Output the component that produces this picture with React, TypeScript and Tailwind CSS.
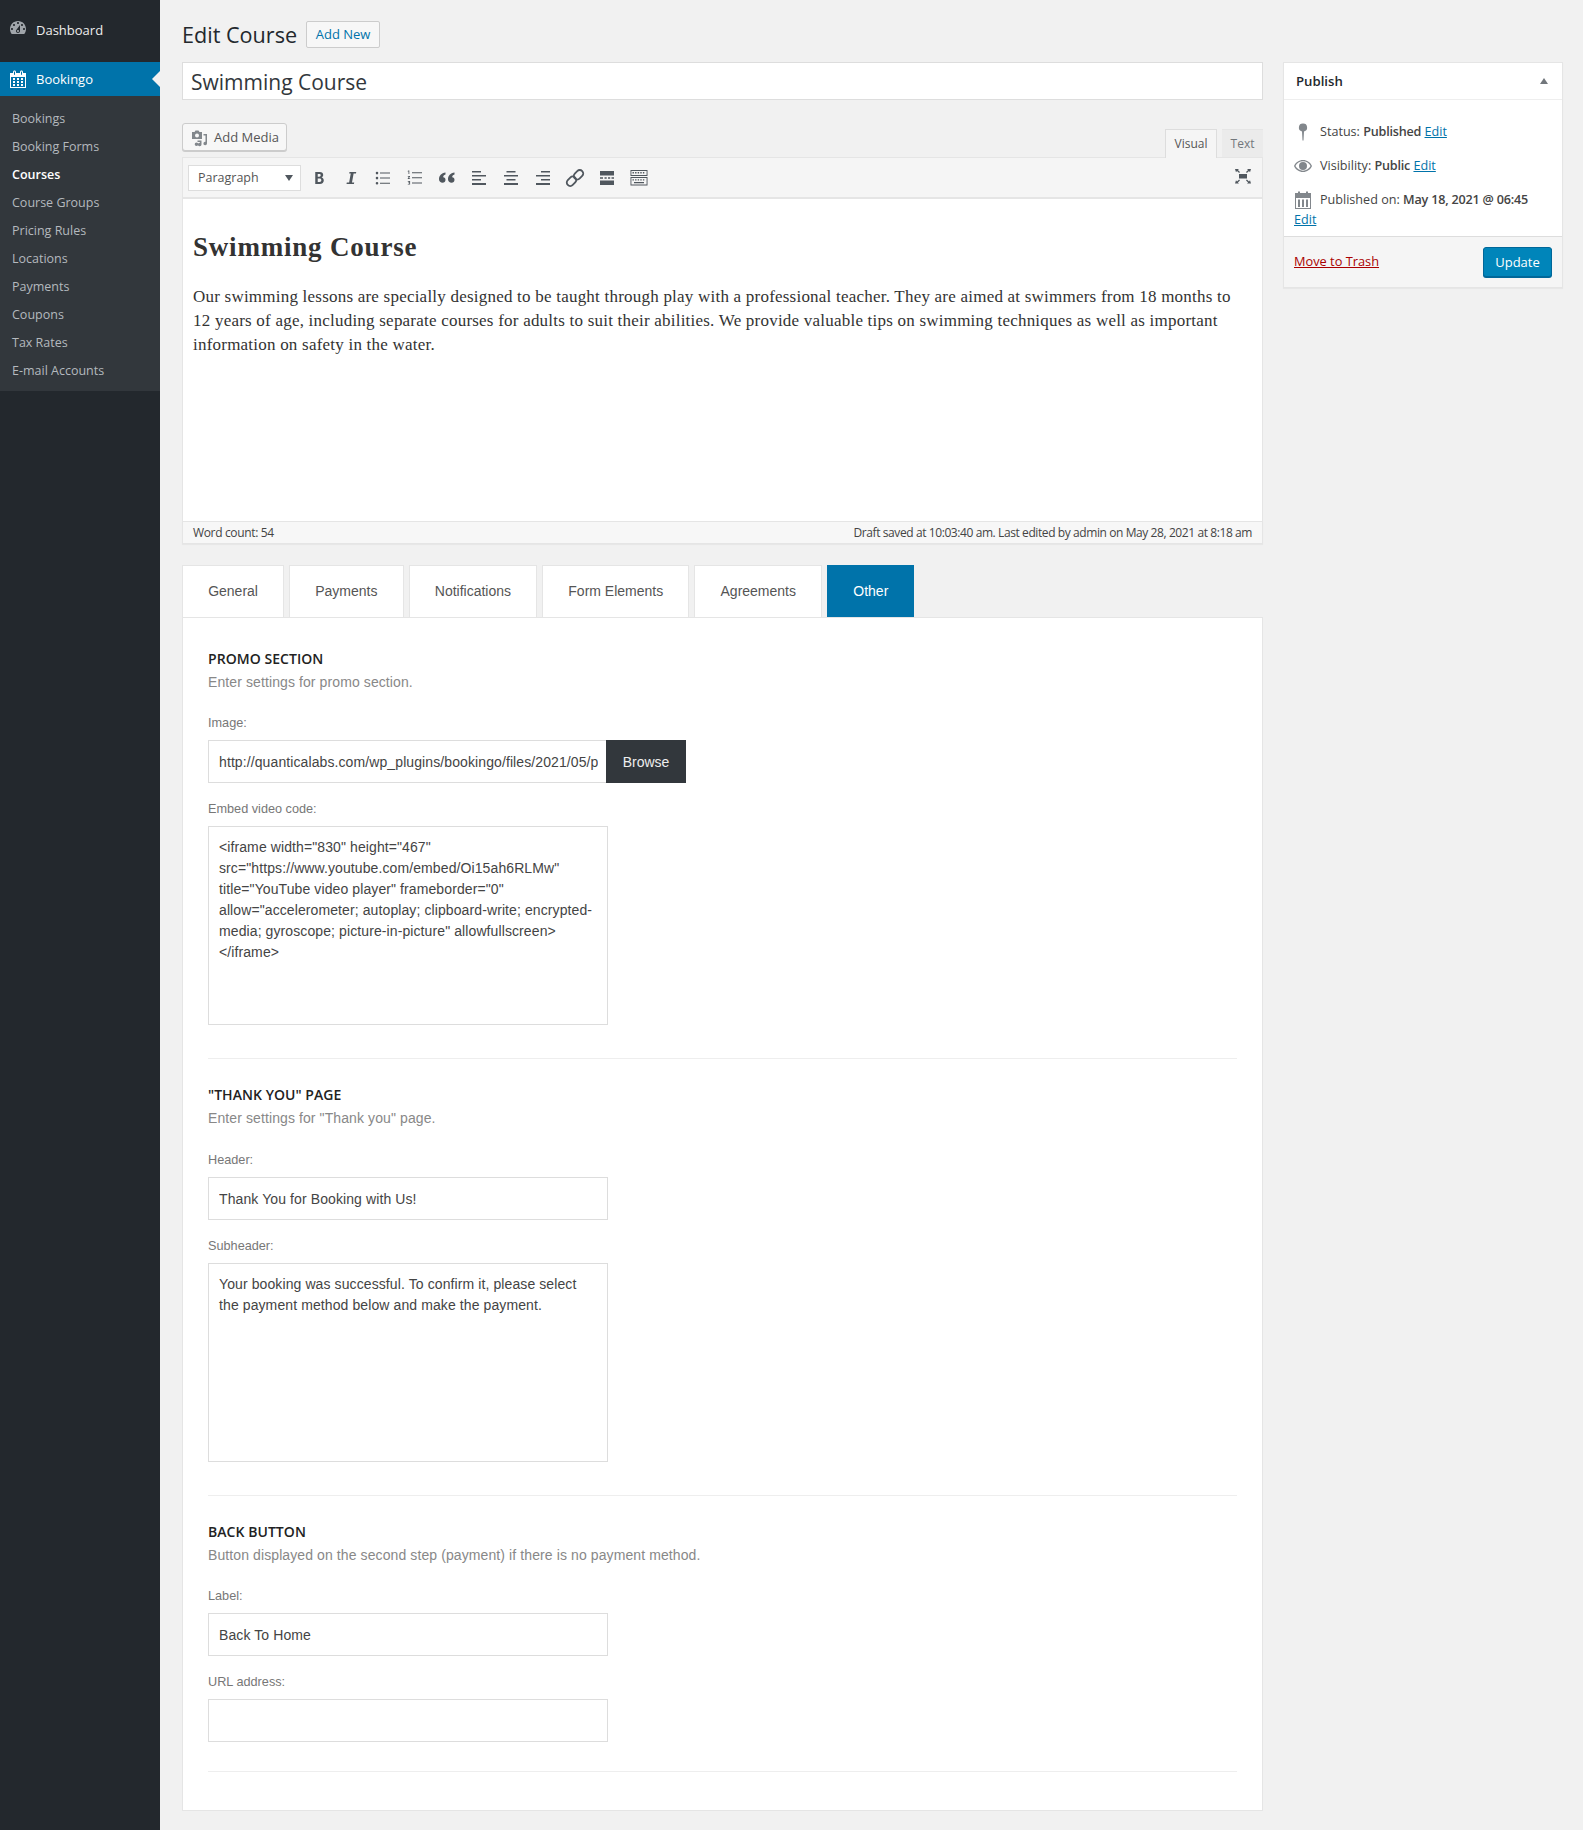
import type { ReactNode } from 'react';

const dashboardPath =
  'M3.76 16h12.48c1.1-1.37 1.76-3.11 1.76-5 0-4.42-3.58-8-8-8s-8 3.58-8 8c0 1.89.66 3.63 1.76 5zM10 4c.55 0 1 .45 1 1s-.45 1-1 1-1-.45-1-1 .45-1 1-1zM6 6c.55 0 1 .45 1 1s-.45 1-1 1-1-.45-1-1 .45-1 1-1zm8 0c.55 0 1 .45 1 1s-.45 1-1 1-1-.45-1-1 .45-1 1-1zm-5.37 5.55L12 7v6c0 1.1-.9 2-2 2s-2-.9-2-2c0-.57.24-1.08.63-1.45zM4 10c.55 0 1 .45 1 1s-.45 1-1 1-1-.45-1-1 .45-1 1-1zm12 0c.55 0 1 .45 1 1s-.45 1-1 1-1-.45-1-1 .45-1 1-1zm-5 3c0-.55-.45-1-1-1s-1 .45-1 1 .45 1 1 1 1-.45 1-1z';
const calendarPath =
  'M15 4h3v15H2V4h3V3c0-.41.15-.76.44-1.06.29-.29.65-.44 1.06-.44s.77.15 1.06.44c.29.3.44.65.44 1.06v1h4V3c0-.41.15-.76.44-1.06.29-.29.65-.44 1.06-.44s.77.15 1.06.44c.29.3.44.65.44 1.06v1zM6 3v2.5c0 .14.05.26.15.36.09.09.21.14.35.14s.26-.05.35-.14c.1-.1.15-.22.15-.36V3c0-.14-.05-.26-.15-.35-.09-.1-.21-.15-.35-.15s-.26.05-.35.15c-.1.09-.15.21-.15.35zm7 0v2.5c0 .14.05.26.14.36.1.09.22.14.36.14s.26-.05.36-.14c.09-.1.14-.22.14-.36V3c0-.14-.05-.26-.14-.35-.1-.1-.22-.15-.36-.15s-.26.05-.36.15c-.09.09-.14.21-.14.35zm4 15V8H3v10h14zM7 9v2H5V9h2zm2 0h2v2H9V9zm4 2V9h2v2h-2zm-6 1v2H5v-2h2zm2 0h2v2H9v-2zm4 2v-2h2v2h-2zm-6 1v2H5v-2h2zm4 2H9v-2h2v2zm4 0h-2v-2h2v2z';

const Icon = ({ size = 20, color, children }: { size?: number; color: string; children: ReactNode }) => (
  <svg width={size} height={size} viewBox="0 0 20 20" fill={color} className="shrink-0">
    {children}
  </svg>
);

const toolbarColor = '#50575e';

const toolbarIcons: ReactNode[] = [
  <path key="b" transform="translate(2.500 2.500) scale(.75)" d="M5 2h6c3 0 4.600 1.500 4.600 3.900 0 1.600-.9 2.800-2.200 3.300 1.800.4 3 1.900 3 3.900 0 3-2 4.900-5.200 4.900H5V2zm3.300 2.700v3.500h2.100c1.200 0 1.900-.6 1.900-1.800s-.7-1.700-1.900-1.700H8.300zm0 6v4.600h2.500c1.500 0 2.300-.8 2.300-2.300s-.8-2.300-2.300-2.300H8.300z" />,
  <path key="i" transform="translate(2.500 2.500) scale(.75)" d="M8 2h9l-.4 2h-3.100l-2.200 12h3l-.4 2H4l.4-2h3.100L9.700 4H7.600L8 2z" />,
  <path key="ul" d="M4 3.800a1.300 1.300 0 1 1 0 2.600 1.300 1.300 0 0 1 0-2.600zm0 5a1.300 1.300 0 1 1 0 2.600 1.300 1.300 0 0 1 0-2.600zm0 5.200a1.300 1.300 0 1 1 0 2.600 1.300 1.300 0 0 1 0-2.600zM7 4.600h10v1H7v-1zm0 5h10v1H7v-1zm0 5.200h10v1H7v-1z" />,
  <path key="ol" d="M3.500 2.500h.8v3.500h-.8V3.400h-.8v-.5l.8-.4zM2.800 8h2.200v.7L3.800 10.200h1.300v.7H2.800v-.7L4 8.700H2.800V8zm0 5h2.300v3.600H2.800v-.7h1.400v-.7h-1v-.6h1v-.9H2.800V13zM7 4.200h10v1H7v-1zm0 5h10v1H7v-1zm0 5.200h10v1H7v-1z" />,
  <path key="q" d="M8.500 4.500v2C6.800 7 6.300 8 6.200 9.200c1.400 0 2.300 1 2.300 2.500 0 1.800-1.200 3-3 3S2 13.300 2 11.300c0-3.700 2.400-6.300 6.500-6.800zm9 0v2c-1.700.5-2.200 1.500-2.300 2.700 1.400 0 2.300 1 2.300 2.500 0 1.800-1.200 3-3 3s-3.500-1.400-3.500-3.400c0-3.700 2.400-6.300 6.500-6.800z" />,
  <path key="al" d="M3 3h9v1.600H3V3zm0 4h14v1.400H3V7zm0 4h9v1.400H3V11zm0 4h14v2H3v-2z" />,
  <path key="ac" d="M5.500 3h9v1.600h-9V3zM3 7h14v1.400H3V7zm2.500 4h9v1.400h-9V11zM3 15h14v2H3v-2z" />,
  <path key="ar" d="M8 3h9v1.600H8V3zM3 7h14v1.400H3V7zm5 4h9v1.400H8V11zM3 15h14v2H3v-2z" />,
  <g key="lnk" fill="none" stroke={toolbarColor} strokeWidth="1.800">
    <rect x="10" y="1.500" width="7" height="10.500" rx="3.500" transform="rotate(45 13.500 6.750)" />
    <rect x="3" y="8" width="7" height="10.500" rx="3.500" transform="rotate(45 6.500 13.250)" />
  </g>,
  <path key="more" d="M3 3h14v4.500H3V3zm0 9.500h14V17H3v-4.500zM3 9.200h3v1.600H3V9.200zm4.500 0h2.200v1.600H7.500V9.200zm3.500 0h2.200v1.600H11V9.200zm3.500 0H17v1.600h-2.500V9.200z" />,
  <g key="kb">
    <path fillRule="evenodd" d="M1.500 2h17v6h-17V2zm.9.900v4.200h15.200V2.900H2.400zM1.500 9h17v8.500h-17V9zm.9.900v6.700h15.200V9.900H2.400z" />
    <path d="M3.500 4h1.400v1.400H3.500zm2.600 0h1.400v1.400H6.100zm2.600 0h1.400v1.400H8.700zm2.600 0h1.400v1.400h-1.400zm2.600 0h1.400v1.400h-1.400zM3.500 11.200h1.400v1.400H3.500zm2.600 0h1.400v1.400H6.100zm2.600 0h1.400v1.400H8.700zm2.600 0h1.400v1.400h-1.400zm2.600 0h1.400v1.400h-1.400zM5 14h10v1.200H5z" />
  </g>,
];

const submenu = ['Bookings', 'Booking Forms', 'Courses', 'Course Groups', 'Pricing Rules', 'Locations', 'Payments', 'Coupons', 'Tax Rates', 'E-mail Accounts'];

const tabs = ['General', 'Payments', 'Notifications', 'Form Elements', 'Agreements', 'Other'];

const Label = ({ children }: { children: ReactNode }) => (
  <div className="mb-[8px] text-[12.7px] leading-[17px] text-[#777] font-['Liberation_Sans',sans-serif]">{children}</div>
);

const TextInput = ({ value }: { value: string }) => (
  <input
    readOnly
    value={value}
    className="block h-[43px] w-[400px] border border-[#ddd] bg-white px-[10px] text-[14px] tracking-[0.1px] text-[#444] outline-none font-['Liberation_Sans',sans-serif]"
  />
);

const TextArea = ({ value }: { value: string }) => (
  <textarea
    readOnly
    value={value}
    className="block h-[199px] w-[400px] resize-none border border-[#ddd] bg-white px-[10px] py-[10px] text-[14px] leading-[21px] tracking-[0.1px] text-[#444] outline-none font-['Liberation_Sans',sans-serif]"
  />
);

const SectionHead = ({ title, sub }: { title: string; sub: string }) => (
  <>
    <h3 className="text-[14px] font-semibold leading-[20px] tracking-[0.05px] text-[#222] font-['Open_Sans',sans-serif]">{title}</h3>
    <p className="mt-[3px] text-[14px] leading-[20px] tracking-[0.1px] text-[#888] font-['Liberation_Sans',sans-serif]">{sub}</p>
  </>
);

export default function App() {
  return (
    <div className="flex min-h-[1830px] bg-[#f1f1f1] font-['Open_Sans',sans-serif] text-[13px] text-[#444]">
      {/* Sidebar */}
      <aside className="w-[160px] shrink-0 bg-[#23282d]">
        <div className="flex h-[62px] items-start gap-[8px] pl-[8px] pt-[18px] text-[#eee]">
          <Icon color="#a0a5aa">
            <path fillRule="evenodd" d={dashboardPath} />
          </Icon>
          <span className="text-[13px] leading-[24px]">Dashboard</span>
        </div>
        <div className="relative flex h-[34px] items-center gap-[8px] bg-[#0073aa] pl-[8px] text-white">
          <Icon color="#ffffff">
            <path fillRule="evenodd" d={calendarPath} />
          </Icon>
          <span className="mt-[2px] text-[13px]">Bookingo</span>
          <span className="absolute right-0 top-[9px] h-0 w-0 border-y-[8px] border-r-[8px] border-y-transparent border-r-[#f1f1f1]" />
        </div>
        <ul className="bg-[#32373c] pb-[6px] pt-[9px]">
          {submenu.map((item) => (
            <li
              key={item}
              className={`h-[28px] pl-[12px] text-[12.5px] leading-[28px] ${item === 'Courses' ? 'font-semibold text-white' : 'text-[#b4b9be]'}`}
            >
              {item}
            </li>
          ))}
        </ul>
      </aside>

      {/* Main */}
      <main className="flex-1 pl-[22px] pr-[20px]">
        <div className="flex h-[62px] items-start pt-[21px]">
          <h1 className="-mt-[1px] text-[21.6px] leading-[29px] text-[#23282d]">Edit Course</h1>
          <a className="ml-[9px] flex h-[27px] w-[74px] items-center justify-center rounded-[2px] border border-[#ccc] bg-[#f7f7f7] text-[13px] font-medium text-[#0073aa]">
            Add New
          </a>
        </div>

        <div className="flex gap-[20px]">
          <div className="w-[1081px] shrink-0">
            <input
              readOnly
              value="Swimming Course"
              className="block h-[38px] w-full border border-[#ddd] bg-white px-[8px] pt-[2px] text-[21px] text-[#32373c] outline-none"
            />

            {/* Editor head */}
            <div className="mt-[23px] flex h-[34px] items-start justify-between">
              <button className="flex h-[28px] w-[105px] items-center gap-[5px] rounded-[3px] border border-[#ccc] bg-[#f7f7f7] pl-[8px] pt-[1px] text-[13px] text-[#555] shadow-[0_1px_0_#ccc]">
                <svg width="18" height="18" viewBox="0 0 18 18" fill="#82878c" className="shrink-0">
                  <path fillRule="evenodd" d="M1 3h2.500l1-1.500h3l1 1.500H11v7H1V3zm5 1.500a2 2 0 1 0 0 4 2 2 0 0 0 0-4z" />
                  <path d="M12.500 5H16v9.500a1.800 1.800 0 1 1-1.500-1.800V6.500h-2V5zM6.500 11.500h4v4a1.800 1.800 0 1 1-1.500-1.800V13H6.500v-1.500zM5.500 13.500a1.800 1.800 0 1 1 0 3.600 1.800 1.800 0 0 1 0-3.600z" />
                </svg>
                Add Media
              </button>
              <div className="flex items-end gap-[5px] self-end text-[13px]">
                <div className="-mb-px flex h-[29px] w-[52px] items-center justify-center border border-b-0 border-[#ddd] bg-[#f5f5f5] text-[12px] text-[#555]">Visual</div>
                <div className="flex h-[28px] w-[41px] items-center justify-center border-t border-[#e5e5e5] bg-[#ebebeb] text-[12px] text-[#72777c]">Text</div>
              </div>
            </div>

            {/* Toolbar */}
            <div className="flex h-[42px] items-center border border-b-2 border-[#e5e5e5] bg-[#f5f5f5] pl-[5px] pr-[10px]">
              <div className="flex h-[26px] w-[113px] items-center justify-between border border-[#ddd] bg-white pl-[9px] pr-[7px] pt-[1px] text-[12.5px] text-[#555]">
                Paragraph
                <span className="h-0 w-0 border-x-[4px] border-t-[6px] border-x-transparent border-t-[#50575e]" />
              </div>
              <div className="ml-[8px] flex gap-[12px]">
                {toolbarIcons.map((icon, i) => (
                  <Icon key={i} color={toolbarColor}>
                    {icon}
                  </Icon>
                ))}
              </div>
              <div className="-mr-[1px] -mt-[3px] ml-auto">
                <Icon size={20} color={toolbarColor}>
                  <path d="M6 8h8v4.500H6zM2 3h4L4.900 4.100 7 6l-.9.900L4 5 3 6.200zM18 3h-4l1.100 1.100L13 6l.9.900L16 5l1 1.200zM2 17.500h4l-1.100-1.100L7 14.500l-.9-.9L4 15.500l-1-1.200zM18 17.500h-4l1.100-1.100-2.100-1.900.9-.9 2.100 1.900 1-1.200z" />
                </Icon>
              </div>
            </div>

            {/* Editor body */}
            <div className="h-[322px] border-x border-[#e5e5e5] bg-white pl-[10px] pt-[33px] font-['Liberation_Serif',serif] text-[#333]">
              <h2 className="text-[27px] font-bold leading-[30px] tracking-[0.8px] text-[#333]">Swimming Course</h2>
              <p className="mt-[23px] w-[1050px] text-[17px] leading-[24px] tracking-[0.22px]">
                Our swimming lessons are specially designed to be taught through play with a professional teacher. They are aimed at swimmers from 18 months to 12 years of age, including separate courses for adults to suit their abilities. We provide valuable tips on swimming techniques as well as important information on safety in the water.
              </p>
            </div>

            {/* Status bar */}
            <div className="flex h-[23px] items-center justify-between border border-[#e5e5e5] bg-[#f7f7f7] px-[10px] text-[12px] tracking-[-0.35px] text-[#444] shadow-[0_1px_1px_rgba(0,0,0,0.04)]">
              <span>Word count: 54</span>
              <span className="tracking-[-0.41px]">Draft saved at 10:03:40 am. Last edited by admin on May 28, 2021 at 8:18 am</span>
            </div>

            {/* Tabs */}
            <div className="mt-[21px] flex gap-[5px] font-['Liberation_Sans',sans-serif] text-[14px]">
              {tabs.map((tab) => (
                <div
                  key={tab}
                  className={`flex h-[52px] items-center border px-[25.15px] ${tab === 'Other' ? 'border-[#0073aa] bg-[#0073aa] text-white' : 'border-[#e5e5e5] border-b-0 bg-white text-[#555]'}`}
                >
                  {tab}
                </div>
              ))}
            </div>

            {/* Tab panel */}
            <div className="h-[1194px] border border-[#e5e5e5] bg-white px-[25px] pt-[31px]">
              <SectionHead title="PROMO SECTION" sub="Enter settings for promo section." />
              <div className="mt-[23px]">
                <Label>Image:</Label>
                <div className="flex">
                  <input
                    readOnly
                    value="http://quanticalabs.com/wp_plugins/bookingo/files/2021/05/pexels-photo.jpg"
                    className="block h-[43px] w-[398px] border border-r-0 border-[#ddd] bg-white pl-[10px] pr-[8px] text-[14px] tracking-[0.1px] text-[#444] outline-none font-['Liberation_Sans',sans-serif]"
                  />
                  <div className="flex h-[43px] w-[80px] items-center justify-center bg-[#32373c] pt-[1px] text-[14px] text-[#eee] font-['Liberation_Sans',sans-serif]">Browse</div>
                </div>
              </div>
              <div className="mt-[18px]">
                <Label>Embed video code:</Label>
                <TextArea value={'<iframe width="830" height="467" src="https://www.youtube.com/embed/Oi15ah6RLMw" title="YouTube video player" frameborder="0" allow="accelerometer; autoplay; clipboard-write; encrypted-media; gyroscope; picture-in-picture" allowfullscreen></iframe>'} />
              </div>
              <hr className="mt-[33px] border-[#eee]" />

              <div className="mt-[26px]">
                <SectionHead title={'"THANK YOU" PAGE'} sub={'Enter settings for "Thank you" page.'} />
              </div>
              <div className="mt-[24px]">
                <Label>Header:</Label>
                <TextInput value="Thank You for Booking with Us!" />
              </div>
              <div className="mt-[18px]">
                <Label>Subheader:</Label>
                <TextArea value="Your booking was successful. To confirm it, please select the payment method below and make the payment." />
              </div>
              <hr className="mt-[33px] border-[#eee]" />

              <div className="mt-[26px]">
                <SectionHead title="BACK BUTTON" sub="Button displayed on the second step (payment) if there is no payment method." />
              </div>
              <div className="mt-[23px]">
                <Label>Label:</Label>
                <TextInput value="Back To Home" />
              </div>
              <div className="mt-[18px]">
                <Label>URL address:</Label>
                <TextInput value="" />
              </div>
              <hr className="mt-[29px] border-[#eee]" />
            </div>
          </div>

          {/* Publish box */}
          <div className="h-[226px] w-[280px] shrink-0 border border-[#e5e5e5] bg-white shadow-[0_1px_1px_rgba(0,0,0,0.04)]">
            <div className="flex h-[37px] items-center justify-between border-b border-[#eee] pl-[12px] pr-[14px]">
              <span className="mt-[2px] text-[13.2px] font-semibold text-[#23282d]">Publish</span>
              <span className="h-0 w-0 border-x-[4px] border-b-[6px] border-x-transparent border-b-[#72777c]" />
            </div>
            <div className="h-[136px] px-[10px] pt-[22px] text-[12.6px] leading-[20px]">
              <div className="flex h-[34px] items-start">
                <div className="-ml-[1px] flex w-[27px] shrink-0">
                  <Icon color="#82878c">
                    <path d="M10 1.500a4 4 0 0 1 1 7.900l-.5 9.100h-1L9 9.400a4 4 0 0 1 1-7.900z" />
                  </Icon>
                </div>
                <span>
                  Status: <b className="font-semibold tracking-[-0.2px]">Published</b> <a className="text-[#0073aa] underline">Edit</a>
                </span>
              </div>
              <div className="flex h-[34px] items-start">
                <div className="-ml-[1px] flex w-[27px] shrink-0">
                  <Icon color="#82878c">
                    <path fillRule="evenodd" d="M10 4c4 0 7.500 2.500 9 6-1.500 3.500-5 6-9 6s-7.500-2.500-9-6c1.500-3.500 5-6 9-6zm0 1.300c-3.300 0-6.200 2-7.600 4.700 1.400 2.700 4.300 4.700 7.600 4.700s6.200-2 7.600-4.700C16.200 7.300 13.300 5.300 10 5.300zM10 6a4 4 0 1 1 0 8 4 4 0 0 1 0-8z" />
                  </Icon>
                </div>
                <span>
                  Visibility: <b className="font-semibold tracking-[-0.2px]">Public</b> <a className="text-[#0073aa] underline">Edit</a>
                </span>
              </div>
              <div>
                <span className="-ml-[1px] inline-flex w-[27px] align-top">
                  <Icon color="#82878c">
                    <path fillRule="evenodd" d="M2 3h3V1.500h2V3h6V1.500h2V3h3v16H2V3zm1 5v10h14V8H3zm2 1.500h2V17H5V9.500zm4 0h2V17H9V9.500zm4 0h2V17h-2V9.500z" />
                  </Icon>
                </span>
                Published on: <b className="font-semibold tracking-[-0.2px]">May 18, 2021 @ 06:45</b> <a className="text-[#0073aa] underline">Edit</a>
              </div>
            </div>
            <div className="flex h-[51px] items-center justify-between border-t border-[#ddd] bg-[#f5f5f5] pl-[10px] pr-[10px]">
              <a className="text-[12.8px] text-[#a00] underline">Move to Trash</a>
              <button className="flex h-[30px] w-[69px] items-center justify-center rounded-[3px] border border-[#006799] bg-[#0085ba] pt-[2px] text-[13px] text-white shadow-[0_1px_0_#006799]">
                Update
              </button>
            </div>
          </div>
        </div>
      </main>
    </div>
  );
}
